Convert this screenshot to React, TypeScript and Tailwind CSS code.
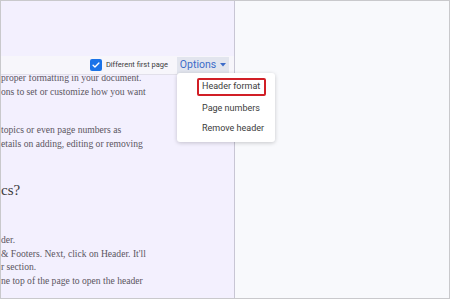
import React from 'react';

const serif = { fontFamily: '"Liberation Serif", "DejaVu Serif", serif' };

export default function App() {
  return (
    <div className="w-[450px] h-[299px] flex border border-[#c9c9cc] bg-[#f8f9fc] overflow-hidden" style={{ fontFamily: 'Roboto, "Liberation Sans", sans-serif' }}>
      {/* Document page */}
      <div className="relative w-[234px] h-full bg-[#f3f0fe] border-r border-[#c8c6d4] overflow-hidden">
        <div className="h-[55px]" />

        {/* Header toolbar */}
        <div className="relative z-10 h-[19px] bg-[#f7f6fb] border-b border-[#e2e0ea] flex items-center justify-end pr-[5px]">
          <div className="flex items-center gap-[4px] mr-[9px]">
            <div className="w-[12px] h-[12px] rounded-[2px] bg-[#1a73e8] flex items-center justify-center">
              <svg width="10" height="10" viewBox="0 0 24 24" fill="none" stroke="white" strokeWidth="3.2" strokeLinecap="round" strokeLinejoin="round">
                <path d="M5 12.5l4.5 4.5L19 7" />
              </svg>
            </div>
            <span className="text-[7.5px] text-[#3c3c3c]">Different first page</span>
          </div>
          <div className="h-[17px] w-[52px] bg-[#e2e5ee] flex items-center justify-center gap-[4px] text-[10.5px] text-[#3d6cc9]">
            <span>Options</span>
            <svg width="6" height="4" viewBox="0 0 6 4">
              <path d="M0 0h6L3 3.5z" fill="#3d6cc9" />
            </svg>
          </div>
        </div>

        {/* Body text */}
        <div className="-mt-[4px] text-[9.6px] leading-[13.5px] text-[#5b5661] whitespace-nowrap" style={serif}>
          <p>proper formatting in your document.</p>
          <p>ons to set or customize how you want</p>
          <p className="mt-[25px]">topics or even page numbers as</p>
          <p>etails on adding, editing or removing</p>
          <p className="mt-[30px] text-[15px] leading-[20px] text-[#3a3a3a]">cs?</p>
          <p className="mt-[33px]">der.</p>
          <p>&amp; Footers. Next, click on Header. It'll</p>
          <p>r section.</p>
          <p>ne top of the page to open the header</p>
        </div>
      </div>

      {/* Right area */}
      <div className="flex-1" />

      {/* Options dropdown menu */}
      <div className="absolute left-[177px] top-[73px] w-[98px] h-[69px] bg-white rounded-[3px] shadow-[0_1px_4px_rgba(0,0,0,0.2)] z-20 pt-[5px] text-[9px] text-[#3c3c3c] whitespace-nowrap">
        <div className="ml-[20px] w-[69px] h-[18px] border-[2px] border-[#d11f26] rounded-[2px] flex items-center pl-[3px]">
          Header format
        </div>
        <div className="pl-[25px] mt-[6px] h-[14px] flex items-center">Page numbers</div>
        <div className="pl-[25px] mt-[6px] h-[14px] flex items-center">Remove header</div>
      </div>
    </div>
  );
}
